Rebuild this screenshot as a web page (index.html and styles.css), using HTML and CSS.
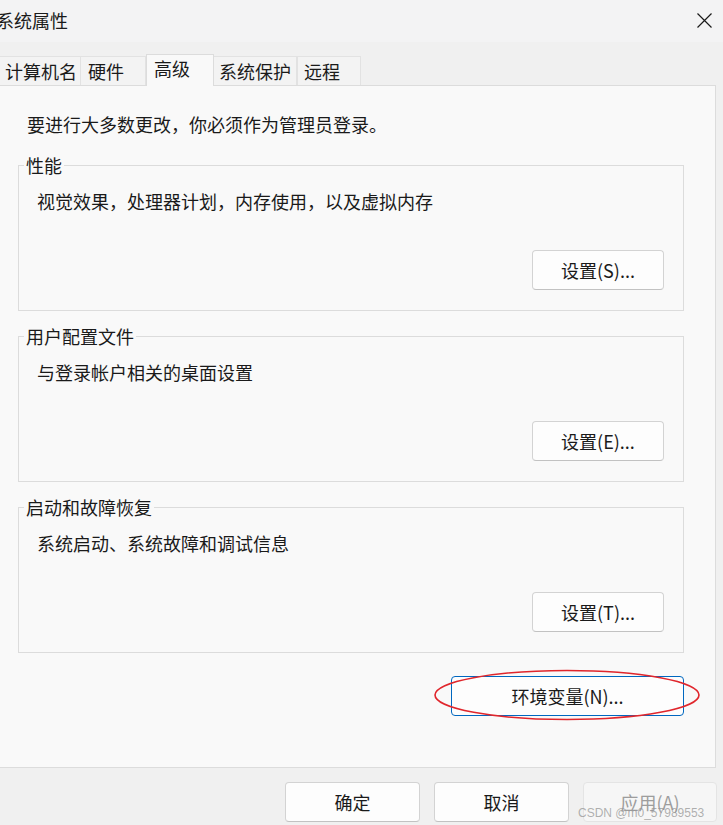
FILE: index.html
```html
<!DOCTYPE html>
<html lang="zh-CN">
<head>
<meta charset="utf-8">
<title>系统属性</title>
<link rel="stylesheet" href="styles.css">
</head>
<body>
<div class="window">
  <header class="titlebar">
    <span class="title">系统属性</span>
    <button class="close" aria-label="关闭">
      <svg width="15" height="15" viewBox="0 0 15 15"><path d="M0.5 0.5 L14.5 14.5 M14.5 0.5 L0.5 14.5" stroke="#1a1a1a" stroke-width="1.2" fill="none"/></svg>
    </button>
  </header>

  <nav class="tabs">
    <div class="tab t1">计算机名</div>
    <div class="tab t2">硬件</div>
    <div class="tab t3 active">高级</div>
    <div class="tab t4">系统保护</div>
    <div class="tab t5">远程</div>
  </nav>

  <main class="panel">
    <p class="intro">要进行大多数更改，你必须作为管理员登录。</p>

    <fieldset class="group">
      <legend>性能</legend>
      <p class="desc">视觉效果，处理器计划，内存使用，以及虚拟内存</p>
      <div class="actions"><button class="btn">设置(S)...</button></div>
    </fieldset>

    <fieldset class="group">
      <legend>用户配置文件</legend>
      <p class="desc">与登录帐户相关的桌面设置</p>
      <div class="actions"><button class="btn">设置(E)...</button></div>
    </fieldset>

    <fieldset class="group">
      <legend>启动和故障恢复</legend>
      <p class="desc">系统启动、系统故障和调试信息</p>
      <div class="actions"><button class="btn">设置(T)...</button></div>
    </fieldset>

    <div class="env-row">
      <button class="btn env">环境变量(N)...</button>
      <svg class="annot" width="268" height="54" viewBox="0 0 268 54"><ellipse cx="134" cy="27" rx="132" ry="24.5" fill="none" stroke="#e0262c" stroke-width="1.6"/></svg>
    </div>
  </main>

  <footer class="footer">
    <button class="btn fbtn">确定</button>
    <button class="btn fbtn">取消</button>
    <button class="btn fbtn disabled">应用(A)</button>
    <span class="watermark">CSDN @m0_57989553</span>
  </footer>
</div>
</body>
</html>
```

FILE: styles.css
```css
* { box-sizing: border-box; }

html, body {
  margin: 0;
  padding: 0;
  width: 723px;
  height: 825px;
  overflow: hidden;
  background: #f0f0f0;
  font-family: "Noto Sans CJK SC", "Noto Sans", sans-serif;
  color: #1a1a1a;
}

.window {
  position: relative;
  width: 723px;
  height: 825px;
}

.titlebar {
  height: 42px;
  background: #f3f3f4;
  display: flex;
  align-items: center;
  justify-content: space-between;
}

.title {
  font-size: 18px;
  line-height: 24px;
  margin-left: -4px;
  margin-top: -2px;
}

.close {
  border: none;
  background: transparent;
  padding: 0;
  width: 15px;
  height: 15px;
  margin-right: 11px;
  margin-top: -2px;
  display: flex;
}

.tabs {
  height: 43px;
  display: flex;
  align-items: flex-end;
  margin-left: -1px;
  position: relative;
  z-index: 1;
}

.tab {
  height: 29px;
  font-size: 18px;
  line-height: 28px;
  padding-left: 6px;
  background: #f3f3f3;
  border: 1px solid #e2e2e2;
  border-bottom: none;
  white-space: nowrap;
}

.t1 { width: 82px; padding-left: 5px; }
.t2 { width: 65px; padding-left: 7px; border-left: none; }
.t3 { width: 68px; padding-left: 7px; }
.t4 { width: 83px; padding-left: 5px; border-left: none; }
.t5 { width: 64px; padding-left: 6px; }

.tab.active {
  height: 32px;
  margin-bottom: -1px;
  background: #f9f9f9;
  border-color: #dcdcdc;
  line-height: 26px;
}

.panel {
  margin-left: -1px;
  width: 717px;
  height: 683px;
  background: #f9f9f9;
  border: 1px solid #dcdcdc;
  padding: 0 0 0 18px;
}

.intro {
  margin: 26px 0 0 9px;
  font-size: 18px;
  line-height: 24px;
}

.group {
  width: 666px;
  margin: 19px 0 0 0;
  padding: 14px 19px 20px 19px;
  border: 1px solid #dcdcdc;
  min-width: 0;
}

.group + .group { margin-top: 15px; }

.group legend {
  font-size: 18px;
  line-height: 20px;
  padding: 0 2px;
  margin-left: -14px;
}

.desc {
  margin: 0 0 0 -1px;
  font-size: 18px;
  line-height: 24px;
}

.actions {
  display: flex;
  justify-content: flex-end;
  margin-top: 37px;
}

.btn {
  font-family: inherit;
  font-size: 18px;
  color: #1a1a1a;
  background: #fdfdfd;
  border: 1px solid #d3d3d3;
  border-bottom-color: #c2c2c2;
  border-radius: 4px;
  height: 40px;
  padding: 0;
  line-height: 36px;
}

.actions .btn { width: 132px; }

.env-row {
  position: relative;
  width: 666px;
  margin-top: 23px;
  display: flex;
  justify-content: flex-end;
}

.btn.env {
  width: 233px;
  border: 1px solid #0067c0;
  border-radius: 4px;
}

.annot {
  position: absolute;
  left: 415px;
  top: -8px;
  pointer-events: none;
}

.footer {
  position: relative;
  display: flex;
  justify-content: flex-end;
  gap: 14px;
  padding: 14px 6px 0 0;
}

.fbtn { width: 135px; height: 40px; }
.fbtn.disabled { width: 134px; }

.fbtn.disabled {
  color: #9d9d9d;
  background: #f6f6f6;
  border-color: #e4e4e4;
}

.watermark {
  position: absolute;
  left: 578px;
  top: 37px;
  font-family: "Liberation Sans", sans-serif;
  font-size: 12px;
  line-height: 16px;
  color: rgba(150, 150, 150, 0.75);
  pointer-events: none;
  white-space: nowrap;
}
```
